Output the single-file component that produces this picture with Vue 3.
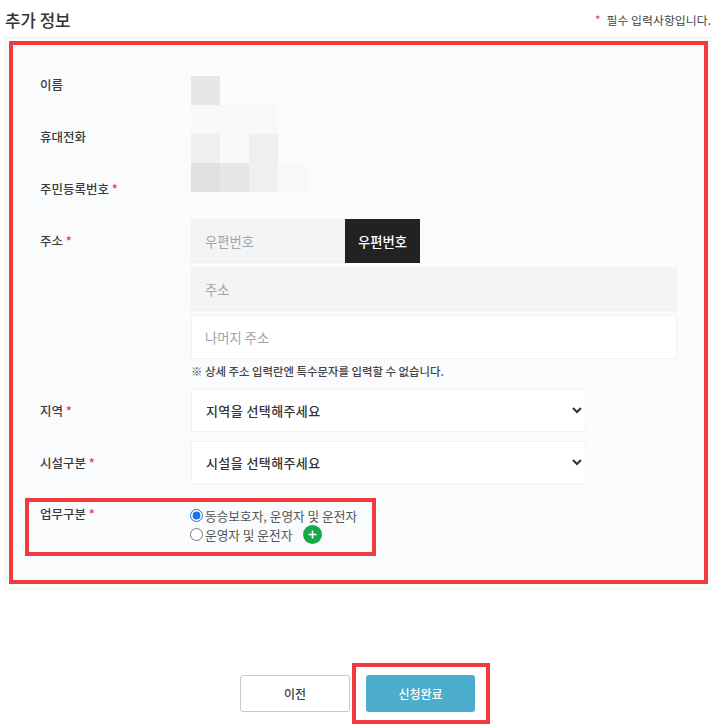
<template>
  <div class="page">
    <div class="head">
      <h2 class="title">추가 정보</h2>
      <p class="required-note"><span class="star">*</span>필수 입력사항입니다.</p>
    </div>

    <div class="panel">
      <div class="frame">
        <div class="identity">
          <label class="label">이름</label>
          <label class="label">휴대전화</label>
          <label class="label">주민등록번호 <span class="star">*</span></label>
          <div class="mosaic">
            <i v-for="(color, i) in mosaic" :key="i" :style="{ background: color }"></i>
          </div>
        </div>

        <div class="row address">
          <label class="label">주소 <span class="star">*</span></label>
          <div class="field-stack">
            <div class="zip-line">
              <input class="input zip readonly" placeholder="우편번호" readonly />
              <button type="button" class="zip-button">우편번호</button>
            </div>
            <input class="input readonly" placeholder="주소" readonly />
            <input class="input" placeholder="나머지 주소" />
            <p class="hint">※ 상세 주소 입력란엔 특수문자를 입력할 수 없습니다.</p>
          </div>
        </div>

        <div class="row select-row">
          <label class="label">지역 <span class="star">*</span></label>
          <select class="select">
            <option>지역을 선택해주세요</option>
          </select>
        </div>

        <div class="row select-row">
          <label class="label">시설구분 <span class="star">*</span></label>
          <select class="select">
            <option>시설을 선택해주세요</option>
          </select>
        </div>

        <div class="work-box">
          <label class="label work-label">업무구분 <span class="star">*</span></label>
          <div class="radios">
            <label class="radio">
              <input v-model="work" type="radio" value="guardian" />
              <span>동승보호자, 운영자 및 운전자</span>
            </label>
            <label class="radio">
              <input v-model="work" type="radio" value="driver" />
              <span>운영자 및 운전자</span>
              <svg class="plus" viewBox="0 0 19 19" width="19" height="19">
                <circle cx="9.5" cy="9.5" r="9.5" fill="#16a94b" />
                <path d="M9.5 5.5v8M5.5 9.5h8" stroke="#fff" stroke-width="1.6" fill="none" />
              </svg>
            </label>
          </div>
        </div>
      </div>
    </div>

    <div class="actions">
      <button type="button" class="btn prev">이전</button>
      <div class="submit-frame">
        <button type="button" class="btn submit">신청완료</button>
      </div>
    </div>
  </div>
</template>

<script setup>
import { ref } from 'vue';

const work = ref('guardian');

const mosaic = [
  '#e6e7e9', '#fbfbfc', 'transparent', 'transparent',
  '#f7f8f9', '#f7f8f9', '#f7f8f9', 'transparent',
  '#eeeff0', '#f7f8f9', '#eeeff0', 'transparent',
  '#dfe1e1', '#e6e7e9', '#eeeff0', '#f7f8f9'
];
</script>

<style scoped>
.page {
  width: 720px;
  height: 724px;
  overflow: hidden;
  background: #fff;
  color: #333;
  font-family: "Noto Sans CJK KR", "Noto Sans", sans-serif;
}

.head {
  height: 37px;
  display: flex;
  justify-content: space-between;
  align-items: center;
  padding: 2px 9px 0 5px;
  box-sizing: border-box;
}

.title {
  margin: 0;
  font-size: 16.8px;
  font-weight: 500;
  color: #333;
}

.required-note {
  margin: 0;
  font-size: 11.9px;
  color: #444;
}

.required-note .star {
  margin-right: 6px;
}

.star {
  color: #d9426a;
}

.panel {
  width: 706px;
  height: 553px;
  margin-left: 5px;
  padding: 4px 3px 6px 4px;
  box-sizing: border-box;
  background: #fafbfd;
  box-shadow: inset 0 0 0 1px #f1f2f4;
}

.frame {
  height: 543px;
  padding-top: 18px;
  box-sizing: border-box;
  border: 4px solid #f03a3e;
}

.identity {
  display: grid;
  grid-template-columns: 151px 116px;
  grid-template-rows: repeat(3, 44px);
  row-gap: 8px;
  padding-left: 27px;
  margin-bottom: 8px;
}

.identity .label {
  grid-column: 1;
}

.mosaic {
  grid-column: 2;
  grid-row: 1 / 4;
  display: grid;
  grid-template-columns: repeat(4, 29px);
  grid-auto-rows: 29px;
  margin-top: 13px;
}

.row {
  display: grid;
  grid-template-columns: 151px 1fr;
  padding-left: 27px;
}

.label {
  font-size: 12.5px;
  font-weight: 500;
  line-height: 44px;
  color: #3a3a3a;
}

.field-stack {
  display: flex;
  flex-direction: column;
  gap: 4px;
  width: 486px;
}

.zip-line {
  display: flex;
}

.input {
  width: 100%;
  height: 44px;
  padding: 0 13px;
  box-sizing: border-box;
  font-family: inherit;
  font-size: 13.3px;
  background: #fff;
  border: 1px solid #f1f2f4;
  border-radius: 0;
  outline: none;
}

.input::placeholder {
  color: #9aa7b0;
}

.readonly {
  background: #f4f4f4;
}

.zip {
  width: 154px;
}

.zip-button {
  width: 75px;
  height: 44px;
  padding: 0;
  font-family: inherit;
  font-size: 13.3px;
  font-weight: 500;
  color: #fff;
  background: #222;
  border: none;
  border-radius: 0;
}

.hint {
  margin: 0;
  height: 18px;
  line-height: 16px;
  font-size: 11.4px;
  font-weight: 500;
  color: #444;
}

.address {
  margin-bottom: 8px;
}

.select-row {
  margin-bottom: 9px;
}

.select-row .label {
  line-height: 43px;
}

.select {
  width: 395px;
  height: 43px;
  padding: 0 10px;
  box-sizing: border-box;
  font-family: inherit;
  font-size: 13px;
  font-weight: 500;
  letter-spacing: 0.4px;
  color: #333;
  background: #fff;
  border: 1px solid #f1f2f4;
  border-radius: 0;
  outline: none;
}

.work-box {
  display: grid;
  grid-template-columns: 150px 1fr;
  width: 351px;
  height: 58px;
  margin: 14px 0 0 12px;
  padding-left: 11px;
  box-sizing: border-box;
  border: 4px solid #f03a3e;
}

.work-label {
  line-height: 24px;
}

.radios {
  display: flex;
  flex-direction: column;
  padding-top: 4px;
}

.radio {
  display: flex;
  align-items: center;
  height: 19px;
  font-size: 12.7px;
  color: #555;
}

.radio input {
  width: 13px;
  height: 13px;
  margin: 0 2px 0 0;
  accent-color: #1a73e8;
}

.plus {
  margin-left: 11px;
}

.actions {
  display: flex;
  align-items: flex-start;
  height: 134px;
  padding: 73px 0 0 240px;
  box-sizing: border-box;
}

.btn {
  width: 110px;
  height: 37px;
  padding: 0;
  font-family: inherit;
  font-size: 12px;
  font-weight: 500;
  border-radius: 3px;
}

.prev {
  margin-top: 12px;
  color: #444;
  background: #fff;
  border: 1px solid #c8c8c8;
}

.submit-frame {
  width: 138px;
  height: 61px;
  margin-left: 2px;
  padding: 8px 0 0 10px;
  box-sizing: border-box;
  border: 4px solid #f03a3e;
}

.submit {
  width: 109px;
  color: #fff;
  background: #4baccb;
  border: none;
}
</style>

<style>
body {
  background: #fff;
}
</style>
